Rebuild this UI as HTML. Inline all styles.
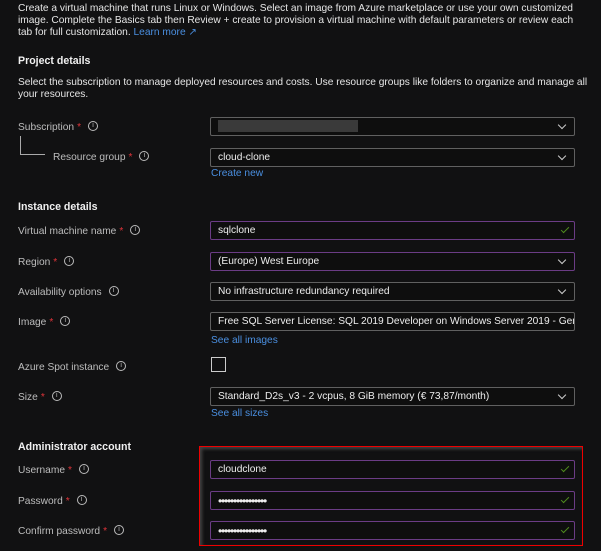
<!DOCTYPE html>
<html><head><style>
body{margin:0;width:601px;height:551px;background:#111112;font-family:"Liberation Sans",sans-serif;font-size:10.2px;color:#e6e6e6;position:relative;overflow:hidden}
.a{position:absolute;white-space:nowrap}
.t{left:18px;line-height:12px}
h{font-weight:bold;font-size:10.6px;color:#f0f0f0}
.l{left:18px;color:#bdbdbd;line-height:12px;margin-top:1px}
.l s{text-decoration:none;color:#e0343a;margin-left:3px}
.i{display:inline-block;width:8px;height:8px;border:1px solid #bbb;border-radius:50%;font-size:7px;line-height:8px;text-align:center;margin-left:7px;vertical-align:middle;position:relative;top:-1px;color:#bbb}
.f{left:210px;height:17px;border:1px solid #606060;border-radius:2px;background:#0e0e0e;line-height:18px;padding-left:7px;width:356px;color:#eee}
.p{border-color:#6b3c85}
.c:after{content:"";position:absolute;right:9px;top:4px;width:5px;height:5px;border-right:1px solid #ccc;border-bottom:1px solid #ccc;transform:rotate(45deg)}
.k:after{content:"";position:absolute;right:7px;top:3px;width:3px;height:7px;border-right:1px solid #4f8a1e;border-bottom:1px solid #4f8a1e;transform:rotate(45deg)}
.lk{color:#4a8fe0}
.d{font-size:12px;letter-spacing:-1.2px}
</style></head><body>
<div class="a t" style="top:3px">Create a virtual machine that runs Linux or Windows. Select an image from Azure marketplace or use your own customized<br>image. Complete the Basics tab then Review + create to provision a virtual machine with default parameters or review each<br>tab for full customization. <span class="lk">Learn more ↗</span></div>
<div class="a t" style="top:55px"><h>Project details</h></div>
<div class="a t" style="top:77px">Select the subscription to manage deployed resources and costs. Use resource groups like folders to organize and manage all<br>your resources.</div>
<div class="a l" style="top:121px">Subscription<s>*</s><span class="i">i</span></div>
<div class="a" style="left:20px;top:136px;width:24px;height:18px;border-left:1px solid #aaa;border-bottom:1px solid #aaa"></div>
<div class="a l" style="left:53px;top:151px">Resource group<s>*</s><span class="i">i</span></div>
<div class="a f c" style="top:117px"><span style="display:inline-block;width:140px;height:12px;background:#3a3a3a;vertical-align:middle"></span></div>
<div class="a f c" style="top:148px">cloud-clone</div>
<div class="a lk" style="left:211px;top:168px">Create new</div>
<div class="a t" style="top:201px"><h>Instance details</h></div>
<div class="a l" style="top:225px">Virtual machine name<s>*</s><span class="i">i</span></div>
<div class="a f p k" style="top:221px">sqlclone</div>
<div class="a l" style="top:256px">Region<s>*</s><span class="i">i</span></div>
<div class="a f p c" style="top:252px">(Europe) West Europe</div>
<div class="a l" style="top:286px">Availability options<span class="i">i</span></div>
<div class="a f c" style="top:282px">No infrastructure redundancy required</div>
<div class="a l" style="top:316px">Image<s>*</s><span class="i">i</span></div>
<div class="a f" style="top:312px;overflow:hidden">Free SQL Server License: SQL 2019 Developer on Windows Server 2019 - Gen1</div>
<div class="a lk" style="left:211px;top:335px">See all images</div>
<div class="a l" style="top:361px">Azure Spot instance<span class="i">i</span></div>
<div class="a" style="left:211px;top:357px;width:13px;height:13px;border:1px solid #ccc"></div>
<div class="a l" style="top:391px">Size<s>*</s><span class="i">i</span></div>
<div class="a f c" style="top:387px">Standard_D2s_v3 - 2 vcpus, 8 GiB memory (€ 73,87/month)</div>
<div class="a lk" style="left:211px;top:408px">See all sizes</div>
<div class="a t" style="top:441px"><h>Administrator account</h></div>
<div class="a" style="left:199px;top:446px;width:382px;height:98px;border:1px solid #e00;box-shadow:inset 2px 2px 3px #444"></div>
<div class="a l" style="top:464px">Username<s>*</s><span class="i">i</span></div>
<div class="a f p k" style="top:460px">cloudclone</div>
<div class="a l" style="top:495px">Password<s>*</s><span class="i">i</span></div>
<div class="a f p k d" style="top:491px">••••••••••••••••</div>
<div class="a l" style="top:525px">Confirm password<s>*</s><span class="i">i</span></div>
<div class="a f p k d" style="top:521px">••••••••••••••••</div>
</body></html>
